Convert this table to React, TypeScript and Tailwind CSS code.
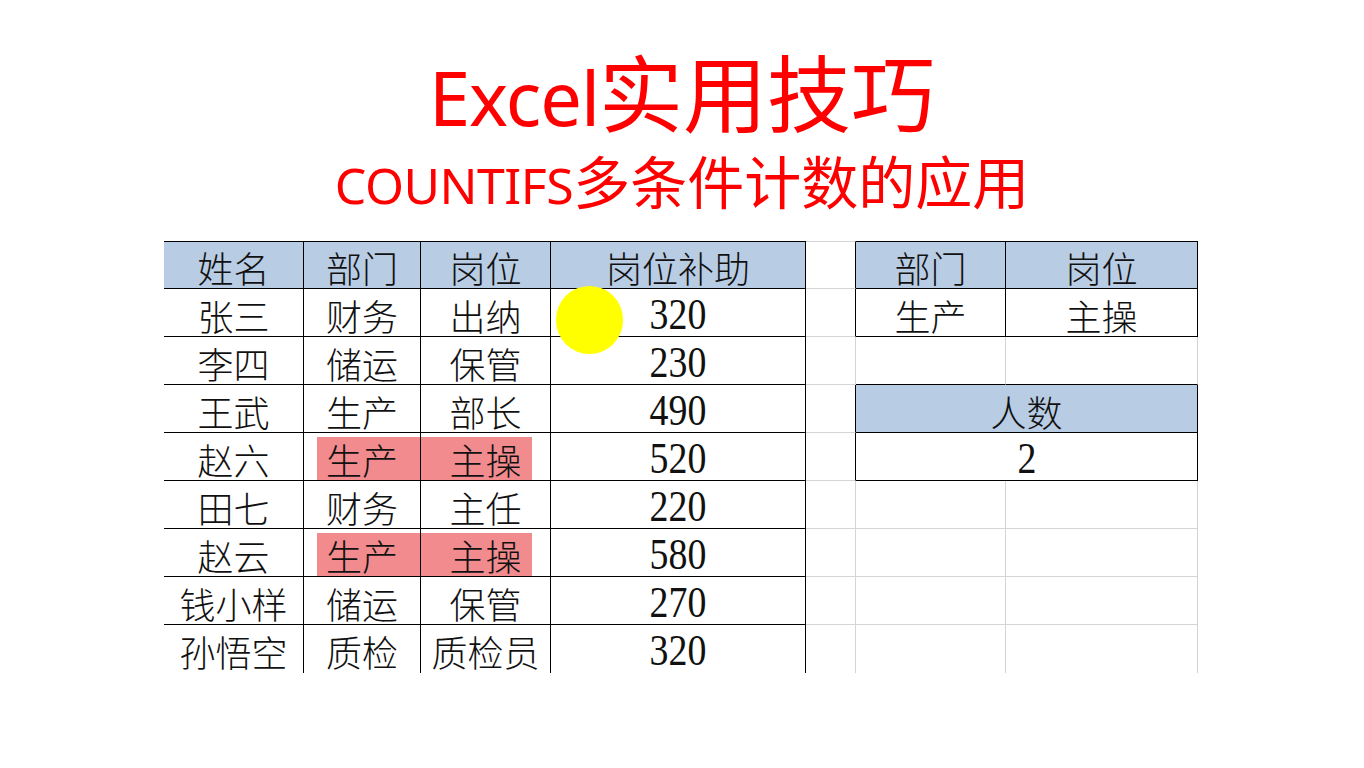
import React from "react";

const dark = "border-black";
const light = "border-[#d4d4d4]";

const leftRows = [
  ["姓名", "部门", "岗位", "岗位补助"],
  ["张三", "财务", "出纳", "320"],
  ["李四", "储运", "保管", "230"],
  ["王武", "生产", "部长", "490"],
  ["赵六", "生产", "主操", "520"],
  ["田七", "财务", "主任", "220"],
  ["赵云", "生产", "主操", "580"],
  ["钱小样", "储运", "保管", "270"],
  ["孙悟空", "质检", "质检员", "320"],
];

const pinkRows = [4, 6];

const cjk = "font-['Noto_Sans_CJK_SC',sans-serif] text-[36px] font-light text-[#111]";
const num = "font-['Liberation_Serif',serif] text-[44px] text-[#111] scale-x-[0.86] inline-block";

function Text({ v }: { v: string }) {
  if (/^\d+$/.test(v)) return <span className={num}>{v}</span>;
  return <span className={cjk}>{v}</span>;
}

function LeftCell({ r, c, v }: { r: number; c: number; v: string }) {
  const head = r === 0;
  const last = r === 8;
  const pink = pinkRows.includes(r) && (c === 1 || c === 2);
  return (
    <div
      className={[
        "relative flex items-center justify-center border-r leading-none pt-[4px]",
        dark,
        head ? "border-t bg-[#b8cce4]" : "",
        last ? "" : "border-b",
      ].join(" ")}
    >
      {pink && c === 1 && <div className="absolute left-[13px] right-0 top-[4px] bottom-0 bg-[#f28b8e]" />}
      {pink && c === 2 && <div className="absolute left-0 w-[111px] top-[4px] bottom-0 bg-[#f28b8e]" />}
      <span className="relative">
        <Text v={v} />
      </span>
    </div>
  );
}

function GapCell({ r }: { r: number }) {
  const darkRight = r === 0 || r === 1 || r === 3 || r === 4;
  return (
    <div
      className={[
        "border-r",
        darkRight ? "border-r-black" : "border-r-[#d4d4d4]",
        r === 0 ? "border-t border-t-[#d4d4d4]" : "",
        r === 8 ? "" : "border-b border-b-[#d4d4d4]",
      ].join(" ")}
    />
  );
}

function RightCells({ r }: { r: number }) {
  if (r === 0 || r === 1) {
    const vals = r === 0 ? ["部门", "岗位"] : ["生产", "主操"];
    return (
      <>
        {vals.map((v, i) => (
          <div
            key={i}
            className={[
              "flex items-center justify-center border-r border-b border-black leading-none pt-[4px]",
              r === 0 ? "border-t bg-[#b8cce4]" : "",
            ].join(" ")}
          >
            <Text v={v} />
          </div>
        ))}
      </>
    );
  }
  if (r === 2) {
    return (
      <>
        <div className="border-r border-r-[#d4d4d4] border-b border-b-black" />
        <div className="border-r border-r-[#d4d4d4] border-b border-b-black" />
      </>
    );
  }
  if (r === 3) {
    return (
      <div className="col-span-2 flex items-center justify-center border-r border-b border-black bg-[#b8cce4] leading-none pt-[4px]">
        <Text v="人数" />
      </div>
    );
  }
  if (r === 4) {
    return (
      <div className="col-span-2 flex items-center justify-center border-r border-b border-black leading-none pt-[4px]">
        <Text v="2" />
      </div>
    );
  }
  const b = r === 8 ? "" : "border-b";
  return (
    <>
      <div className={["border-r", b, light].join(" ")} />
      <div className={["border-r", b, light].join(" ")} />
    </>
  );
}

export default function App() {
  return (
    <div className="relative w-[1364px] h-[768px] bg-white overflow-hidden">
      <div className="flex flex-col items-center text-[#ff0000] pt-[48px]">
        <div className="flex items-baseline leading-none h-[92px]">
          <span className="font-['Noto_Sans',sans-serif] text-[74px] tracking-[-1px]">Excel</span>
          <span className="font-['Noto_Sans_CJK_SC',sans-serif] text-[84px]">实用技巧</span>
        </div>
        <div className="flex items-baseline leading-none h-[72px] mt-[11px]">
          <span className="font-['Noto_Sans',sans-serif] text-[50px] tracking-[-0.5px]">COUNTIFS</span>
          <span className="font-['Noto_Sans_CJK_SC',sans-serif] text-[57px]">多条件计数的应用</span>
        </div>
      </div>

      <div className="ml-[164px] mt-[18px] grid grid-cols-[140px_117px_130px_255px_50px_150px_192px] auto-rows-[48px] w-[1034px]">
        {leftRows.map((row, r) => (
          <React.Fragment key={r}>
            {row.map((v, c) => (
              <LeftCell key={c} r={r} c={c} v={v} />
            ))}
            <GapCell r={r} />
            <RightCells r={r} />
          </React.Fragment>
        ))}
      </div>

      <div className="absolute left-[556px] top-[286px] w-[67px] h-[68px] rounded-full bg-[#ffff00]" />
    </div>
  );
}
